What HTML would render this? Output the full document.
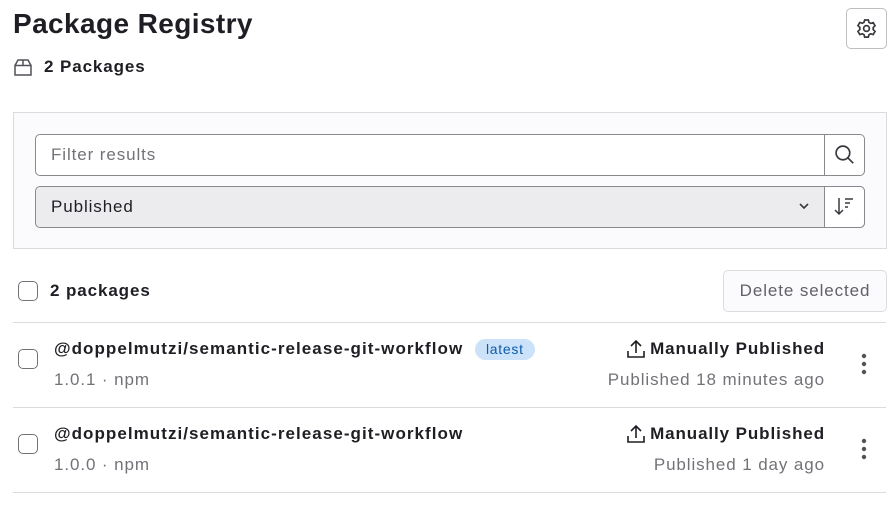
<!DOCTYPE html>
<html><head><meta charset="utf-8"><style>
*{box-sizing:border-box;margin:0;padding:0}
body{width:895px;height:509px;background:#fff;font-family:"Liberation Sans",sans-serif;color:#1f1e24;position:relative;overflow:hidden;letter-spacing:0.9px}
.a{position:absolute;white-space:nowrap}
.b{font-weight:bold}
.cb{position:absolute;width:20px;height:20px;border:1.5px solid #737278;border-radius:5px;background:#fff}
.line{position:absolute;left:13px;width:873px;height:1px;background:#dcdcde}
.sub{color:#737278;font-size:17px}
</style></head><body>
<div class="a" style="left:13px;top:8px;font-size:28px;font-weight:600;letter-spacing:0.4px">Package Registry</div>
<div class="a" style="left:846px;top:8px;width:41px;height:41px;border:1px solid #bfbfc3;border-radius:5px"></div>
<svg class="a" style="left:856px;top:18px" width="21" height="21" viewBox="0 0 16 16" fill="none" stroke="#3a383f" stroke-width="1.3"><path d="M6.6 1.5h2.8l.5 1.9 1.3.7 1.9-.6 1.4 2.4-1.4 1.4v1.5l1.4 1.4-1.4 2.4-1.9-.6-1.3.7-.5 1.9H6.6l-.5-1.9-1.3-.7-1.9.6L1.5 10.2l1.4-1.4V7.2L1.5 5.8l1.4-2.4 1.9.6 1.3-.7z"/><circle cx="8" cy="8" r="2.2"/></svg>
<svg class="a" style="left:14px;top:59px" width="18" height="17" viewBox="0 0 18 17" fill="none" stroke="#535158" stroke-width="1.5"><path d="M1 6.5h16V16H1zM1 6.5L4 1h10l3 5.5M9 1v5.5"/></svg>
<div class="a b" style="left:44px;top:57px;font-size:17px">2 Packages</div>
<div class="a" style="left:13px;top:112px;width:874px;height:137px;background:#fbfafd;border:1px solid #dcdcde"></div>
<div class="a" style="left:35px;top:134px;width:830px;height:42px;border:1px solid #89888d;border-radius:5px;background:#fff"></div>
<div class="a" style="left:824px;top:134px;width:1px;height:42px;background:#89888d"></div>
<div class="a" style="left:51px;top:145px;font-size:17px;color:#737278">Filter results</div>
<svg class="a" style="left:834px;top:144px" width="21" height="21" viewBox="0 0 20 20" fill="none" stroke="#3a383f" stroke-width="1.6"><circle cx="8.5" cy="8.5" r="6.5"/><path d="M13.3 13.3l5 5"/></svg>
<div class="a" style="left:35px;top:186px;width:830px;height:42px;border:1px solid #89888d;border-radius:5px;background:#ececef"></div>
<div class="a" style="left:824px;top:186px;width:41px;height:42px;background:#fff;border:1px solid #89888d;border-radius:0 5px 5px 0"></div>
<div class="a" style="left:51px;top:197px;font-size:17px">Published</div>
<svg class="a" style="left:798px;top:202px" width="12" height="8" viewBox="0 0 12 8" fill="none" stroke="#3a383f" stroke-width="1.6"><path d="M2 2l4 4 4-4"/></svg>
<svg class="a" style="left:834px;top:196px" width="22" height="21" viewBox="0 0 22 21" fill="none" stroke="#3a383f" stroke-width="1.5"><path d="M5 2v16M1 14l4 4 4-4M11 3h8M11 7h5M11 11h3"/></svg>
<div class="cb" style="left:18px;top:281px"></div>
<div class="a b" style="left:50px;top:281px;font-size:17px">2 packages</div>
<div class="a" style="left:723px;top:270px;width:164px;height:42px;border:1px solid #dcdcde;border-radius:5px;background:#fbfafd;color:#626168;font-size:17px;text-align:center;line-height:40px">Delete selected</div>
<div class="line" style="top:322px"></div>
<div class="cb" style="left:18px;top:349px"></div>
<div class="a b" style="left:54px;top:339px;font-size:17px;letter-spacing:1.05px">@doppelmutzi/semantic-release-git-workflow</div>
<div class="a" style="left:475px;top:339px;height:21px;padding:0 11px;border-radius:11px;background:#cbe2f9;color:#0b5cad;font-size:14px;line-height:21px;letter-spacing:0.7px">latest</div>
<div class="a sub" style="left:54px;top:370px">1.0.1 · npm</div>
<svg class="a" style="left:626px;top:339px" width="20" height="20" viewBox="0 0 20 20" fill="none" stroke="#1f1e24" stroke-width="1.6"><path d="M10 14V2M5 7l5-5 5 5M2 12v6h16v-6"/></svg>
<div class="a b" style="right:70px;top:339px;font-size:17px">Manually Published</div>
<div class="a sub" style="right:70px;top:370px">Published 18 minutes ago</div>
<svg class="a" style="left:860px;top:352px" width="8" height="24" viewBox="0 0 8 24" fill="#535158"><circle cx="4" cy="4" r="2.2"/><circle cx="4" cy="12" r="2.2"/><circle cx="4" cy="20" r="2.2"/></svg>
<div class="line" style="top:407px"></div>
<div class="cb" style="left:18px;top:434px"></div>
<div class="a b" style="left:54px;top:424px;font-size:17px;letter-spacing:1.05px">@doppelmutzi/semantic-release-git-workflow</div>
<div class="a sub" style="left:54px;top:455px">1.0.0 · npm</div>
<svg class="a" style="left:626px;top:424px" width="20" height="20" viewBox="0 0 20 20" fill="none" stroke="#1f1e24" stroke-width="1.6"><path d="M10 14V2M5 7l5-5 5 5M2 12v6h16v-6"/></svg>
<div class="a b" style="right:70px;top:424px;font-size:17px">Manually Published</div>
<div class="a sub" style="right:70px;top:455px">Published 1 day ago</div>
<svg class="a" style="left:860px;top:437px" width="8" height="24" viewBox="0 0 8 24" fill="#535158"><circle cx="4" cy="4" r="2.2"/><circle cx="4" cy="12" r="2.2"/><circle cx="4" cy="20" r="2.2"/></svg>
<div class="line" style="top:492px"></div>
</body></html>
